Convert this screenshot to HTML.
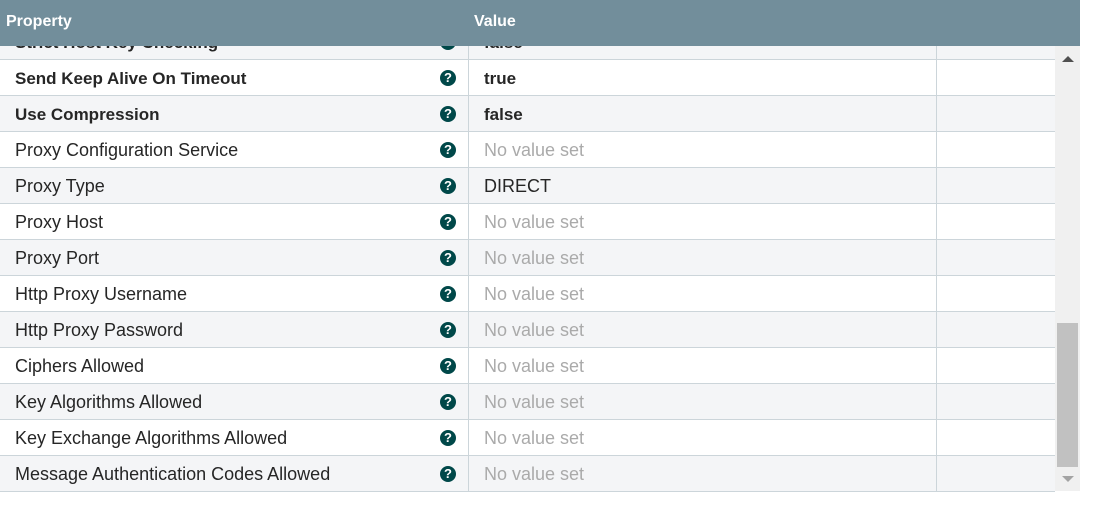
<!DOCTYPE html>
<html><head><style>
*{margin:0;padding:0;box-sizing:border-box}
body{width:1099px;height:507px;background:#fff;font-family:"Liberation Sans",sans-serif;position:relative;overflow:hidden}
.hdr{position:absolute;left:0;top:0;width:1080px;height:46px;background:#728e9b;color:#fff;font-weight:bold;font-size:16px;z-index:2}
.hdr span{position:absolute;top:13px}
.row{position:absolute;left:0;width:1055px;height:36px;border-bottom:1px solid #ccd5da;font-size:18px;color:#262626}
.row.g{background:#f4f5f7}
.row .n{position:absolute;left:15px;top:8px;white-space:nowrap}
.row .v{position:absolute;left:484px;top:8px;white-space:nowrap}
.row .v.e{color:#aaa}
.row.b .n,.row.b .v{font-weight:bold;font-size:17px;top:9px}
.row .q{position:absolute;left:440px;top:10px;width:16px;height:16px;border-radius:50%;background:#004849;color:#fff;font-size:13px;font-weight:bold;text-align:center;line-height:16px}
.d1{position:absolute;left:468px;top:0;width:1px;height:36px;background:#ccd5da}
.d2{position:absolute;left:936px;top:0;width:1px;height:36px;background:#ccd5da}
.sb{position:absolute;left:1055px;top:46px;width:25px;height:445px;background:#f0f0f0}
.th{position:absolute;left:2px;top:277px;width:21px;height:144px;background:#c1c1c1}
.up{position:absolute;left:7px;top:10px;width:0;height:0;border-left:6px solid transparent;border-right:6px solid transparent;border-bottom:6px solid #505050}
.dn{position:absolute;left:7px;top:430px;width:0;height:0;border-left:6px solid transparent;border-right:6px solid transparent;border-top:6px solid #a3a3a3}
</style></head><body>
<div class="hdr"><span style="left:6px">Property</span><span style="left:474px">Value</span></div>

<div class="row g b" style="top:24px"><div class="n">Strict Host Key Checking</div><div class="q">?</div><div class="v">false</div><div class="d1"></div><div class="d2"></div></div>
<div class="row b" style="top:60px"><div class="n">Send Keep Alive On Timeout</div><div class="q">?</div><div class="v">true</div><div class="d1"></div><div class="d2"></div></div>
<div class="row g b" style="top:96px"><div class="n">Use Compression</div><div class="q">?</div><div class="v">false</div><div class="d1"></div><div class="d2"></div></div>
<div class="row" style="top:132px"><div class="n">Proxy Configuration Service</div><div class="q">?</div><div class="v e">No value set</div><div class="d1"></div><div class="d2"></div></div>
<div class="row g" style="top:168px"><div class="n">Proxy Type</div><div class="q">?</div><div class="v">DIRECT</div><div class="d1"></div><div class="d2"></div></div>
<div class="row" style="top:204px"><div class="n">Proxy Host</div><div class="q">?</div><div class="v e">No value set</div><div class="d1"></div><div class="d2"></div></div>
<div class="row g" style="top:240px"><div class="n">Proxy Port</div><div class="q">?</div><div class="v e">No value set</div><div class="d1"></div><div class="d2"></div></div>
<div class="row" style="top:276px"><div class="n">Http Proxy Username</div><div class="q">?</div><div class="v e">No value set</div><div class="d1"></div><div class="d2"></div></div>
<div class="row g" style="top:312px"><div class="n">Http Proxy Password</div><div class="q">?</div><div class="v e">No value set</div><div class="d1"></div><div class="d2"></div></div>
<div class="row" style="top:348px"><div class="n">Ciphers Allowed</div><div class="q">?</div><div class="v e">No value set</div><div class="d1"></div><div class="d2"></div></div>
<div class="row g" style="top:384px"><div class="n">Key Algorithms Allowed</div><div class="q">?</div><div class="v e">No value set</div><div class="d1"></div><div class="d2"></div></div>
<div class="row" style="top:420px"><div class="n">Key Exchange Algorithms Allowed</div><div class="q">?</div><div class="v e">No value set</div><div class="d1"></div><div class="d2"></div></div>
<div class="row g" style="top:456px"><div class="n">Message Authentication Codes Allowed</div><div class="q">?</div><div class="v e">No value set</div><div class="d1"></div><div class="d2"></div></div>

<div class="sb"><div class="up"></div><div class="th"></div><div class="dn"></div></div>
</body></html>
